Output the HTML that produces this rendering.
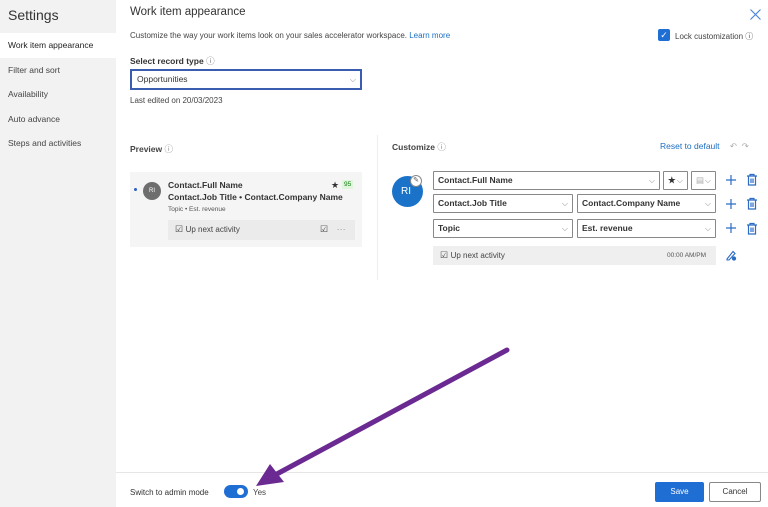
<!DOCTYPE html>
<html><head><style>
*{box-sizing:border-box;margin:0;padding:0}
body{width:768px;height:507px;position:relative;font-family:"Liberation Sans",sans-serif;color:#323130;background:#fff;overflow:hidden;font-size:9px}
.a{position:absolute}
.side{left:0;top:0;width:116px;height:507px;background:#f2f2f2}
.nav{left:0;width:116px;height:25px;line-height:25px;padding-left:8px;font-size:8.5px;color:#444}
.sel{border:1px solid #8a8886;background:#fff;height:19px;border-radius:1px;font-size:8.5px;font-weight:bold;padding-left:4px;line-height:17px;color:#333}
.chev{position:absolute;right:4px;top:0;color:#888;font-size:8px;font-weight:normal}
.blue{color:#1b6ec2}
.ic{color:#2b6cc4;font-size:15px}
</style></head><body>
<div class="a side"></div>
<div class="a" style="left:8px;top:7px;font-size:14px;color:#333">Settings</div>
<div class="a nav" style="top:33px;background:#fff;color:#222">Work item appearance</div>
<div class="a nav" style="top:58px">Filter and sort</div>
<div class="a nav" style="top:82px">Availability</div>
<div class="a nav" style="top:107px">Auto advance</div>
<div class="a nav" style="top:131px">Steps and activities</div>

<div class="a" style="left:130px;top:6px;font-size:11.5px;color:#333">Work item appearance</div>
<svg class="a" style="left:750px;top:9px" width="11" height="11"><path d="M0.5 0.5L10.5 10.5M10.5 0.5L0.5 10.5" stroke="#4f86d6" stroke-width="1.2"/></svg>
<div class="a" style="left:130px;top:31px;font-size:8px;color:#444">Customize the way your work items look on your sales accelerator workspace. <span class="blue">Learn more</span></div>
<div class="a" style="left:658px;top:29px;width:12px;height:12px;background:#1f6ed4;border-radius:2px;color:#fff;font-size:9px;text-align:center;line-height:12px">✓</div>
<div class="a" style="left:675px;top:31px;font-size:8px;color:#444">Lock customization ⓘ</div>
<div class="a" style="left:130px;top:55px;font-size:8.5px;font-weight:bold;color:#333">Select record type <span style="font-weight:normal;color:#777">ⓘ</span></div>
<div class="a" style="left:130px;top:69px;width:232px;height:21px;border:2px solid #3a5db0;font-size:8.5px;padding-left:5px;line-height:17px;color:#333">Opportunities<span class="chev" style="top:0">⌵</span></div>
<div class="a" style="left:130px;top:96px;font-size:8px;color:#444">Last edited on 20/03/2023</div>

<div class="a" style="left:130px;top:143px;font-size:8.5px;font-weight:bold;color:#444">Preview <span style="font-weight:normal;color:#888">ⓘ</span></div>
<div class="a" style="left:130px;top:172px;width:232px;height:75px;background:#f5f5f5"></div>
<div class="a" style="left:134px;top:188px;width:3px;height:3px;border-radius:50%;background:#2b5fc4"></div>
<div class="a" style="left:143px;top:182px;width:18px;height:18px;border-radius:50%;background:#6e6e6e;color:#fff;font-size:6px;text-align:center;line-height:18px">RI</div>
<div class="a" style="left:168px;top:180px;font-size:8.5px;font-weight:bold;color:#333">Contact.Full Name</div>
<div class="a" style="left:331px;top:180px;font-size:9px">★</div>
<div class="a" style="left:342px;top:180px;font-size:6.5px;background:#dff6dd;color:#107c10;padding:1px 2px">95</div>
<div class="a" style="left:168px;top:192px;font-size:8.5px;font-weight:bold;color:#333">Contact.Job Title • Contact.Company Name</div>
<div class="a" style="left:168px;top:206px;font-size:6.5px;color:#555">Topic • Est. revenue</div>
<div class="a" style="left:168px;top:220px;width:187px;height:20px;background:#ebebeb"></div>
<div class="a" style="left:175px;top:224px;font-size:9px;color:#444">☑ <span style="font-size:8px">Up next activity</span></div>
<div class="a" style="left:320px;top:224px;font-size:9px;color:#444">☑ <span style="color:#999;margin-left:6px">···</span></div>

<div class="a" style="left:377px;top:135px;width:1px;height:145px;background:#eee"></div>
<div class="a" style="left:392px;top:141px;font-size:8.5px;font-weight:bold;color:#444">Customize <span style="font-weight:normal;color:#888">ⓘ</span></div>
<div class="a" style="left:660px;top:141px;font-size:8.5px" ><span class="blue">Reset to default</span> <span style="color:#aaa;margin-left:8px">↶ &nbsp;↷</span></div>
<div class="a" style="left:392px;top:176px;width:31px;height:31px;border-radius:50%;background:#1a73c9;color:#fff;font-size:10px;line-height:31px;padding-left:9px">RI</div>
<div class="a" style="left:410px;top:175px;width:12px;height:12px;border-radius:50%;background:#fff;border:1px solid #888;font-size:7px;text-align:center;line-height:10px;color:#555">✎</div>

<div class="a sel" style="left:433px;top:171px;width:227px">Contact.Full Name<span class="chev">⌵</span></div>
<div class="a sel" style="left:663px;top:171px;width:25px">★<span class="chev">⌵</span></div>
<div class="a sel" style="left:691px;top:171px;width:25px;color:#aaa;font-weight:normal">▤<span class="chev">⌵</span></div>
<div class="a sel" style="left:433px;top:194px;width:140px">Contact.Job Title<span class="chev">⌵</span></div>
<div class="a sel" style="left:577px;top:194px;width:139px">Contact.Company Name<span class="chev">⌵</span></div>
<div class="a sel" style="left:433px;top:219px;width:140px">Topic<span class="chev">⌵</span></div>
<div class="a sel" style="left:577px;top:219px;width:139px">Est. revenue<span class="chev">⌵</span></div>
<svg class="a" style="left:724px;top:172px" width="40" height="70" fill="none" stroke="#2b6cc4" stroke-width="1.2">
<path d="M2 8H12M7 3V13"/><path d="M2 32H12M7 27V37"/><path d="M2 56H12M7 51V61"/>
<g><path d="M23 4H33M26 4V2.5H30V4M24.5 4V13H31.5V4M27 6.5V11M29 6.5V11"/></g>
<g transform="translate(0,24)"><path d="M23 4H33M26 4V2.5H30V4M24.5 4V13H31.5V4M27 6.5V11M29 6.5V11"/></g>
<g transform="translate(0,49)"><path d="M23 4H33M26 4V2.5H30V4M24.5 4V13H31.5V4M27 6.5V11M29 6.5V11"/></g>
</svg>
<div class="a" style="left:433px;top:246px;width:283px;height:19px;background:#efefef"></div>
<div class="a" style="left:440px;top:250px;font-size:9px;color:#444">☑ <span style="font-size:8px">Up next activity</span></div>
<div class="a" style="left:667px;top:252px;font-size:6.5px;color:#555">00:00 AM/PM</div>
<svg class="a" style="left:725px;top:249px" width="12" height="12" fill="none" stroke="#2b6cc4" stroke-width="1.1"><path d="M2 10L8 2.5L10 4.5L4 11H2Z"/><circle cx="9" cy="9.5" r="1.6" fill="#2b6cc4"/></svg>

<div class="a" style="left:116px;top:472px;width:652px;height:1px;background:#e6e6e6"></div>
<div class="a" style="left:130px;top:488px;font-size:8px;color:#333">Switch to admin mode</div>
<div class="a" style="left:224px;top:485px;width:24px;height:13px;border-radius:7px;background:#1f6ed4"></div>
<div class="a" style="left:237px;top:488px;width:7px;height:7px;border-radius:50%;background:#fff"></div>
<div class="a" style="left:253px;top:488px;font-size:8px;color:#444">Yes</div>
<div class="a" style="left:655px;top:482px;width:49px;height:20px;background:#1f6ed4;color:#fff;font-size:8px;text-align:center;line-height:20px;border-radius:2px">Save</div>
<div class="a" style="left:709px;top:482px;width:52px;height:20px;border:1px solid #8a8886;color:#333;font-size:8px;text-align:center;line-height:18px;border-radius:2px">Cancel</div>

<svg class="a" style="left:0;top:0" width="768" height="507">
<line x1="507" y1="350" x2="275" y2="475" stroke="#6b2a92" stroke-width="5" stroke-linecap="round"/>
<polygon points="256,486 270,464 284,482" fill="#6b2a92"/>
</svg>
</body></html>
